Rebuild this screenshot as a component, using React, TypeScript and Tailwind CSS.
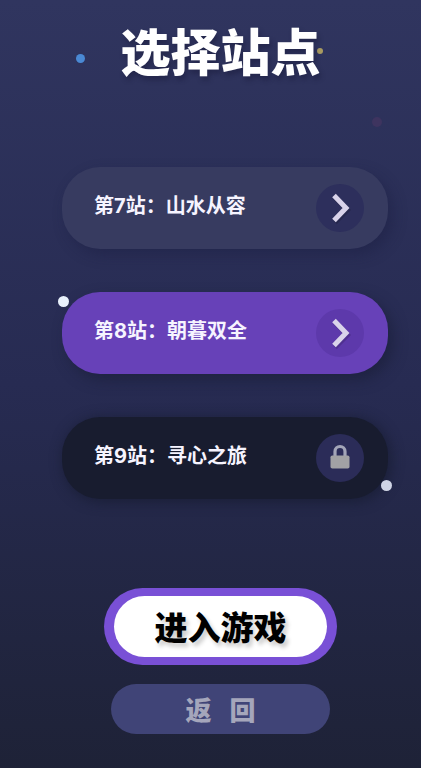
import React, { useState } from 'react';

type Station = {
  id: number;
  name: string;
  locked?: boolean;
};

const stations: Station[] = [
  { id: 7, name: '山水从容' },
  { id: 8, name: '朝暮双全' },
  { id: 9, name: '寻心之旅', locked: true },
];

function ArrowIcon() {
  return (
    <svg viewBox="0 0 48 48" className="h-12 w-12" fill="none" aria-hidden="true">
      <path d="M19 13.5 L31.5 26 L19 38.5" stroke="#000" strokeOpacity="0.15" strokeWidth="5" />
      <path d="M18 11.5 L30 24 L18 36.5" stroke="#d9d3ea" strokeWidth="5" />
    </svg>
  );
}

function LockIcon() {
  return (
    <svg viewBox="0 0 48 48" className="h-12 w-12" fill="none" aria-hidden="true">
      <path d="M19 22 V17.5 A5 5 0 0 1 29 17.5 V22" stroke="#a3a5b8" strokeWidth="3.2" />
      <rect x="14.5" y="21.5" width="19" height="13" rx="1.8" fill="#a2a2a5" />
    </svg>
  );
}

function rowStyle(station: Station, active: boolean) {
  if (station.locked) return 'bg-[#181c2f] shadow-[2px_2px_12px_2px_rgba(22,26,46,0.6)]';
  if (active) return 'bg-[#6741b8] shadow-[5px_6px_14px_0px_rgba(22,26,50,0.5)]';
  return 'bg-[#373b60] shadow-[5px_6px_14px_0px_rgba(25,28,62,0.4)]';
}

function circleStyle(station: Station, active: boolean) {
  if (station.locked) return 'bg-[#2b2c58]';
  if (active) return 'bg-[#5d39ab]';
  return 'bg-[#2d2f5c]';
}

export default function StationSelect() {
  const [selected, setSelected] = useState(8);

  return (
    <main className="relative flex min-h-screen flex-col items-center overflow-hidden bg-linear-to-b from-[#30355f] via-[#272b52] to-[#1e2237] pb-8 pl-5 pt-3 font-['Noto_Sans_CJK_SC',sans-serif]">
      {/* Background dots */}
      <span className="absolute left-[76px] top-[54px] h-[9px] w-[9px] rounded-full bg-[#4a89d4]" />
      <span className="absolute right-[39px] top-[117px] h-2.5 w-2.5 rounded-full bg-[#3e345f]" />

      {/* Title */}
      <div className="relative">
        <span className="absolute -right-0.5 top-9 h-1.5 w-1.5 rounded-full bg-[#a99b61]" />
        <h1 className="relative text-[50px] font-black leading-[74px] text-white [text-shadow:2px_4px_5px_rgba(20,20,50,0.4)]">
          选择站点
        </h1>
      </div>

      {/* Stations */}
      <ul className="mt-[81px] flex w-full flex-col gap-[43px] pl-[42px] pr-[33px]">
        {stations.map((station) => {
          const active = selected === station.id;
          return (
            <li key={station.id} className="relative">
              <button
                type="button"
                disabled={station.locked}
                onClick={() => setSelected(station.id)}
                className={`flex h-[82px] w-full items-center justify-between rounded-[38px] pl-8 pr-6 ${rowStyle(station, active)}`}
              >
                <span className="pb-1 font-[Inter,'Noto_Sans_CJK_SC',sans-serif] text-xl font-bold text-[#f6f4ff]">
                  第{station.id}站：{station.name}
                </span>
                <span className={`rounded-full ${circleStyle(station, active)}`}>
                  {station.locked ? <LockIcon /> : <ArrowIcon />}
                </span>
              </button>
              {active && <span className="absolute -left-1 top-1 h-[11px] w-[11px] rounded-full bg-[#e9f1fc]" />}
              {station.locked && (
                <span className="absolute -right-1 bottom-2 h-[11px] w-[11px] rounded-full bg-[#d0d5e5]" />
              )}
            </li>
          );
        })}
      </ul>

      {/* Actions */}
      <button
        type="button"
        className="mt-[89px] h-[77px] w-[233px] rounded-full bg-[#7950d6] px-2.5 py-2"
      >
        <span className="flex h-full items-center justify-center rounded-full bg-white text-[33px] font-black text-black [text-shadow:3px_4px_4px_rgba(0,0,0,0.2)]">
          进入游戏
        </span>
      </button>
      <button
        type="button"
        className="mt-[19px] h-[50px] w-[219px] whitespace-pre rounded-full bg-[#404477] text-[26px] font-black leading-[50px] text-[#a5a6bb]"
      >
        返   回
      </button>
    </main>
  );
}
